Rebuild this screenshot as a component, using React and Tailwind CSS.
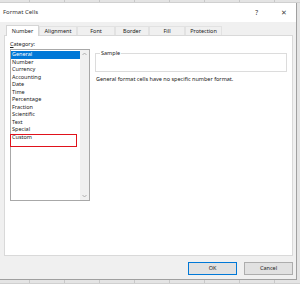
import React from "react";

const items = ["General","Number","Currency","Accounting","Date","Time","Percentage","Fraction","Scientific","Text","Special","Custom"];
const tabs = [
  { l: "Number", w: "w-[33px]", sel: true },
  { l: "Alignment", w: "w-[38px]" },
  { l: "Font", w: "w-[38px]" },
  { l: "Border", w: "w-[34px]" },
  { l: "Fill", w: "w-[36px]" },
  { l: "Protection", w: "w-[37px]" },
];

function GridStrip({ h }) {
  return (
    <div className={`flex ${h} bg-[#e4e4e4] border-b border-[#d0d0d0]`}>
      {Array.from({ length: 9 }).map((_, i) => (
        <div key={i} className={`${i === 0 ? "w-[30px]" : "w-[35px]"} shrink-0 border-r border-[#c8c8c8]`} />
      ))}
    </div>
  );
}

export default function App() {
  return (
    <div className="w-[300px] h-[284px] bg-[#e4e4e4] overflow-hidden relative text-[#222]" style={{ fontFamily: '"Noto Sans", "Open Sans", sans-serif' }}>
      <GridStrip h="h-[3px]" />
      <div className="w-[297px] h-[277px] flex flex-col bg-[#f0f0f0] border-r border-b border-[#a0a0a0]">
        {/* title bar */}
        <div className="h-[19px] bg-white flex items-center shrink-0">
          <span className="ml-[3px] text-[6px] text-[#333]">Format Cells</span>
          <span className="ml-auto mr-[23px] text-[6.5px] text-[#333]">?</span>
          <span className="mr-[9px] text-[7px] text-[#444] leading-none">✕</span>
        </div>
        {/* tabs */}
        <div className="flex pl-[6px] mt-[4px] h-[10px] shrink-0 items-end">
          {tabs.map((t) => (
            <div
              key={t.l}
              className={`${t.w} h-[10px] flex items-center justify-center text-[5.5px] border border-b-0 ${t.sel ? "bg-white border-[#d5d5d5] h-[11px] relative z-10" : "bg-[#f0f0f0] border-[#e2e2e2]"}`}
            >
              {t.l}
            </div>
          ))}
        </div>
        {/* panel */}
        <div className="mx-[4px] w-[289px] h-[221px] bg-white border border-[#d9d9d9] flex relative shrink-0 -mt-px">
          <div className="ml-[5px] mt-[4px] flex flex-col">
            <div className="text-[5.5px] leading-[8px]"><span className="underline">C</span>ategory:</div>
            <div className="mt-[1px] w-[80px] h-[152px] border border-[#a8a8a8] flex">
              <div className="flex-1 pt-[1px]">
                {items.map((it, i) => (
                  <div key={it} className={`h-[7.5px] leading-[7.5px] text-[5.5px] pl-[1px] ${i === 0 ? "bg-[#0078d7] text-white" : ""}`}>{it}</div>
                ))}
              </div>
              <div className="w-[9px] bg-[#f0f0f0] flex flex-col items-center justify-between py-[2px]">
                <svg width="5" height="4" viewBox="0 0 5 4"><path d="M0.5 3 L2.5 1 L4.5 3" fill="none" stroke="#a0a0a0" strokeWidth="0.8" /></svg>
                <svg width="5" height="4" viewBox="0 0 5 4"><path d="M0.5 1 L2.5 3 L4.5 1" fill="none" stroke="#a0a0a0" strokeWidth="0.8" /></svg>
              </div>
            </div>
          </div>
          <div className="ml-[5px] mt-[17px] flex flex-col">
            <div className="w-[192px] h-[19px] border border-[#dcdcdc] relative">
              <span className="absolute left-[4px] -top-[4px] bg-white px-px text-[5.5px] leading-[7px]">Sample</span>
            </div>
            <div className="mt-[4px] ml-[1px] text-[5.5px] leading-[7px]">General format cells have no specific number format.</div>
          </div>
          {/* red highlight annotation */}
          <div className="absolute left-[5px] top-[98px] w-[67px] h-[13px] border-[1.5px] border-[#e0121b]" />
        </div>
        {/* buttons */}
        <div className="flex justify-end gap-[7px] mt-[6px] mr-[3px]">
          <div className="w-[49px] h-[13px] bg-[#e1e1e1] border border-[#0078d7] flex items-center justify-center text-[5.5px]">OK</div>
          <div className="w-[49px] h-[13px] bg-[#e1e1e1] border border-[#adadad] flex items-center justify-center text-[5.5px]">Cancel</div>
        </div>
      </div>
      <GridStrip h="h-[4px]" />
    </div>
  );
}
